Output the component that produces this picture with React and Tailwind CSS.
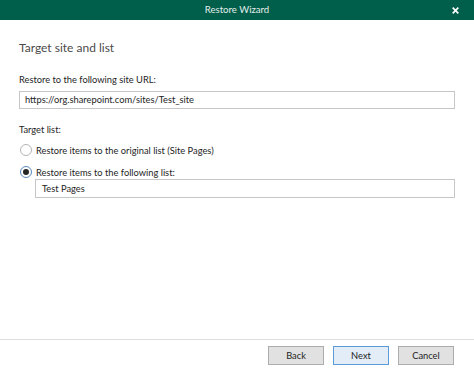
import React from "react";

function Radio({ checked }) {
  return (
    <span
      className={
        "ml-[1px] flex h-[12px] w-[12px] shrink-0 items-center justify-center rounded-full border bg-white " +
        (checked ? "border-[#5a87b8]" : "border-[#b4b4b4]")
      }
    >
      {checked && <span className="h-[6px] w-[6px] rounded-full bg-[#262626]" />}
    </span>
  );
}

export default function App() {
  const font = { fontFamily: 'Lato, "Noto Sans", sans-serif' };
  return (
    <div className="flex h-[372px] w-[474px] flex-col bg-white text-[#1e1e1e]" style={font}>
      <div className="relative flex h-[20px] shrink-0 items-center justify-center bg-[#005f4a] text-[9.6px] text-[#e3eeeb]">
        <span>Restore Wizard</span>
        <svg className="absolute left-[452px] top-[7px]" width="7" height="7" viewBox="0 0 7 7">
          <path d="M0.7 0.7 L6.3 6.3 M6.3 0.7 L0.7 6.3" stroke="#ffffff" strokeWidth="1.7" />
        </svg>
      </div>
      <div className="flex flex-1 flex-col px-[19px]">
        <div className="mt-[20px] text-[12px] leading-[16px] text-[#4a4a4a]">Target site and list</div>
        <div className="mt-[18px] text-[9.3px] leading-[12px]">Restore to the following site URL:</div>
        <div className="mt-[5px] flex h-[18px] items-center border border-[#c6c6c6] px-[5px] text-[9.3px]">
          https://org.sharepoint.com/sites/Test_site
        </div>
        <div className="mt-[15px] text-[9.3px] leading-[12px]">Target list:</div>
        <div className="mt-[7px] flex h-[14px] items-center gap-[4px] text-[9.3px]">
          <Radio />
          <span className="pt-[1px]">Restore items to the original list (Site Pages)</span>
        </div>
        <div className="mt-[8px] flex h-[14px] items-center gap-[4px] text-[9.3px]">
          <Radio checked />
          <span className="pt-[1px]">Restore items to the following list:</span>
        </div>
        <div className="ml-[16px] flex h-[19px] items-center border border-[#c6c6c6] px-[6px] text-[9.3px]">
          Test Pages
        </div>
      </div>
      <div className="flex h-[33px] shrink-0 items-start justify-end gap-[9px] border-t border-[#dedede] pr-[20px] pt-[6px]">
        <button className="h-[19px] w-[56px] border border-[#adadad] bg-[#e1e1e1] text-[9.3px] text-[#1e1e1e]">Back</button>
        <button className="h-[19px] w-[56px] border border-[#5b9ad6] bg-[#e3edf7] text-[9.3px] text-[#1e1e1e]">Next</button>
        <button className="h-[19px] w-[56px] border border-[#adadad] bg-[#e1e1e1] text-[9.3px] text-[#1e1e1e]">Cancel</button>
      </div>
    </div>
  );
}
